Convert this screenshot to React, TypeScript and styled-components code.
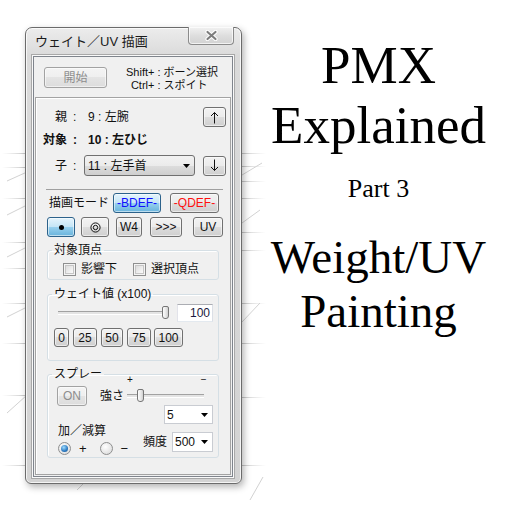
import React from 'react';
import styled, { createGlobalStyle } from 'styled-components';

const UI_FONT = `"Liberation Sans", "Noto Sans CJK JP", sans-serif`;
const SERIF = `"Liberation Serif", "Times New Roman", serif`;

const GlobalStyle = createGlobalStyle`
  * { box-sizing: border-box; }
  html, body { margin: 0; padding: 0; background: #fff; }
  body { width: 512px; height: 512px; overflow: hidden; font-family: ${UI_FONT}; }
`;

const Page = styled.div`
  position: relative;
  display: flex;
  width: 512px;
  height: 512px;
  background: #fff;
  overflow: hidden;
`;

// faint guide strokes behind the dialog
const Backdrop = styled.svg`
  position: absolute;
  left: 0;
  top: 0;
  width: 512px;
  height: 512px;
  pointer-events: none;
`;

const WindowSlot = styled.div`
  position: relative;
  z-index: 1;
  flex: none;
  padding: 27px 0 0 25px;
`;

const Window = styled.div`
  display: flex;
  flex-direction: column;
  width: 217px;
  height: 457px;
  border: 1px solid #6b6b6b;
  border-radius: 7px 7px 6px 6px;
  background: linear-gradient(#ececec, #dadada 28px, #d3d3d3);
  box-shadow: inset 0 0 0 1px rgba(255, 255, 255, 0.75), 2px 3px 7px rgba(0, 0, 0, 0.3);
`;

const TitleBar = styled.div`
  display: flex;
  align-items: flex-start;
  height: 28px;
  padding: 0 7px 0 9px;
`;

const TitleText = styled.span`
  font-size: 13px;
  line-height: 28px;
  color: #1b1b1b;
  white-space: nowrap;
`;

const CloseButton = styled.div`
  display: flex;
  align-items: center;
  justify-content: center;
  width: 46px;
  height: 18px;
  margin: -1px 0 0 auto;
  border: 1px solid #8b8b8b;
  border-top: none;
  border-radius: 0 0 4px 4px;
  background: linear-gradient(#f2f2f2, #dedede 50%, #d2d2d2);
  box-shadow: inset 0 0 0 1px rgba(255, 255, 255, 0.7);
`;

const Client = styled.div`
  display: flex;
  flex-direction: column;
  flex: 1;
  margin: 0 8px 6px 7px;
  border: 1px solid #7f848c;
  background: #f0f0f0;
  box-shadow: 0 0 0 1px #f9f9f9, 0 0 0 2px #a8a8a8;
`;

const TopRow = styled.div`
  display: flex;
  align-items: flex-start;
  height: 40px;
  padding: 10px 0 0 10px;
`;

const Hints = styled.div`
  display: grid;
  grid-template-columns: auto auto;
  column-gap: 3px;
  margin: -1px 0 0 19px;
  font-size: 11px;
  line-height: 13px;
  color: #111;
  white-space: nowrap;
`;

const HintKey = styled.span`
  text-align: right;
`;

const Panel = styled.div`
  display: flex;
  flex-direction: column;
  flex: 1;
  margin: 0 1px 1px 1px;
  border: 1px solid #a3a3a3;
  box-shadow: inset 1px 1px 0 #fff;
`;

const BoneRow = styled.div<{ $h: number; $mt: number }>`
  display: flex;
  align-items: center;
  height: ${p => p.$h}px;
  margin-top: ${p => p.$mt}px;
  font-size: 12px;
  line-height: 14px;
  color: #111;
`;

const BoneLabel = styled.span<{ $bold?: boolean }>`
  flex: none;
  width: 31px;
  text-align: right;
  font-weight: ${p => (p.$bold ? 700 : 400)};
`;

const BoneSep = styled.span<{ $bold?: boolean }>`
  flex: none;
  width: 17px;
  padding-left: 6px;
  font-weight: ${p => (p.$bold ? 700 : 400)};
`;

const BoneValue = styled.div<{ $bold?: boolean }>`
  display: flex;
  align-items: center;
  flex: none;
  width: 119px;
  padding-left: 4px;
  font-weight: ${p => (p.$bold ? 700 : 400)};
  white-space: nowrap;
`;

const Divider = styled.div`
  height: 0;
  margin: 13px 7px 0 10px;
  border-top: 1px solid #a0a0a0;
`;

const ModeRow = styled.div`
  display: flex;
  align-items: center;
  height: 20px;
  margin-top: 3px;
  padding-left: 13px;
`;

const ModeLabel = styled.span`
  flex: none;
  width: 64px;
  font-size: 12px;
  line-height: 14px;
  color: #111;
`;

const ToolRow = styled.div`
  display: flex;
  align-items: center;
  height: 20px;
  margin-top: 4px;
  padding-left: 11px;
`;

const Btn = styled.button<{ $w: number; $h?: number; $on?: boolean; $ink?: string; $dim?: boolean; $ml?: number }>`
  flex: none;
  display: inline-flex;
  align-items: center;
  justify-content: center;
  width: ${p => p.$w}px;
  height: ${p => p.$h ?? 20}px;
  margin: 0 0 0 ${p => p.$ml ?? 0}px;
  padding: 0;
  border: 1px solid ${p => (p.$on ? '#2c628b' : p.$dim ? '#a2a2a2' : '#707070')};
  border-radius: 3px;
  background: ${p =>
    p.$on
      ? 'linear-gradient(#e5f4fc, #c4e5f6 50%, #98d1ef 50%, #68b3db)'
      : p.$dim
      ? 'linear-gradient(#f4f4f4, #efefef 50%, #e4e4e4 50%, #dcdcdc)'
      : 'linear-gradient(#f2f2f2, #ebebeb 50%, #dddddd 50%, #cfcfcf)'};
  box-shadow: inset 0 0 0 1px rgba(255, 255, 255, 0.55);
  font-family: ${UI_FONT};
  font-size: 12px;
  line-height: 1;
  color: ${p => (p.$dim ? '#8d8d8d' : p.$ink ?? '#111')};
  white-space: nowrap;
`;

const Dot = styled.span`
  width: 5px;
  height: 5px;
  border-radius: 50%;
  background: #000;
`;

const Group = styled.fieldset<{ $mt: number; $pb: number }>`
  margin: ${p => p.$mt}px 11px 0 11px;
  padding: 0 0 ${p => p.$pb}px 0;
  min-width: 0;
  border: 1px solid #d5dfe5;
  border-radius: 3px;
  box-shadow: inset 1px 1px 0 #fff;
`;

const Legend = styled.legend`
  margin-left: 4px;
  padding: 0 2px;
  font-size: 12px;
  line-height: 14px;
  color: #111;
`;

const CheckRow = styled.div`
  display: flex;
  align-items: center;
  height: 18px;
  margin-top: 3px;
  padding-left: 15px;
  font-size: 12px;
  line-height: 14px;
  color: #111;
`;

const CheckBox = styled.span<{ $ml?: number }>`
  position: relative;
  flex: none;
  width: 13px;
  height: 13px;
  margin-left: ${p => p.$ml ?? 0}px;
  margin-right: 5px;
  border: 1px solid #8e8f8f;
  background: #f4f4f4;
  &::after {
    content: '';
    position: absolute;
    inset: 1px;
    border: 1px solid #c6c6c6;
    background: linear-gradient(135deg, #dcdcdc, #fbfbfb);
  }
`;

const SliderRow = styled.div`
  display: flex;
  align-items: center;
  height: 18px;
  margin-top: 3px;
  padding-left: 10px;
`;

const SliderBox = styled.div<{ $w: number; $ml?: number }>`
  position: relative;
  flex: none;
  width: ${p => p.$w}px;
  height: 14px;
  margin-left: ${p => p.$ml ?? 0}px;
`;

const Groove = styled.div`
  position: absolute;
  left: 0;
  right: 2px;
  top: 5px;
  height: 4px;
  border-top: 1px solid #a2a2a2;
  border-bottom: 1px solid #fff;
  background: #e4e4e4;
`;

const Thumb = styled.div`
  position: absolute;
  top: 0;
  width: 7px;
  height: 13px;
  border: 1px solid #767676;
  border-radius: 2px 2px 3px 3px;
  background: linear-gradient(90deg, #fdfdfd, #e6e6e6 60%, #cfcfcf);
`;

const TextBox = styled.div`
  display: flex;
  align-items: center;
  justify-content: flex-end;
  flex: none;
  width: 36px;
  height: 18px;
  margin-left: 8px;
  padding-right: 2px;
  border: 1px solid;
  border-color: #abadb3 #dbdfe6 #e3e9ef #e2e3ea;
  background: #fff;
  font-size: 12px;
  color: #1a1a40;
`;

const PresetRow = styled.div`
  display: flex;
  align-items: center;
  height: 19px;
  margin-top: 6px;
  padding-left: 6px;
`;

const Combo = styled.div<{ $w: number; $h: number; $flat?: boolean; $ml?: number }>`
  display: flex;
  align-items: center;
  flex: none;
  width: ${p => p.$w}px;
  height: ${p => p.$h}px;
  margin-left: ${p => p.$ml ?? 0}px;
  padding: 0 4px 0 ${p => (p.$flat ? 2 : 3)}px;
  border: 1px solid ${p => (p.$flat ? '#c9ccd2' : '#707070')};
  border-radius: ${p => (p.$flat ? 0 : 3)}px;
  background: ${p => (p.$flat ? '#fff' : 'linear-gradient(#f2f2f2, #ebebeb 50%, #dddddd 50%, #cfcfcf)')};
  font-size: 12px;
  line-height: 14px;
  color: #111;
  white-space: nowrap;
`;

const ComboText = styled.span`
  flex: 1;
`;

const TickRow = styled.div`
  display: flex;
  align-items: center;
  height: 10px;
  margin-top: -6px;
  padding-left: 79px;
  font-size: 10px;
  line-height: 10px;
  color: #111;
`;

const Tick = styled.span<{ $ml?: number }>`
  margin-left: ${p => p.$ml ?? 0}px;
`;

const StrengthRow = styled.div`
  display: flex;
  align-items: center;
  height: 20px;
  margin-top: 1px;
  padding-left: 9px;
`;

const Caption = styled.span<{ $w?: number; $ml?: number }>`
  flex: none;
  width: ${p => (p.$w ? `${p.$w}px` : 'auto')};
  margin-left: ${p => p.$ml ?? 0}px;
  font-size: 12px;
  line-height: 14px;
  color: #111;
  white-space: nowrap;
`;

const LevelRow = styled.div`
  display: flex;
  height: 19px;
  margin-top: -1px;
  padding-left: 116px;
`;

const BottomRow = styled.div`
  display: flex;
  height: 30px;
  padding-left: 10px;
`;

const BlendColumn = styled.div`
  display: flex;
  flex-direction: column;
  flex: none;
  width: 75px;
`;

const RadioRow = styled.div`
  display: flex;
  align-items: center;
  height: 13px;
  margin-top: 4px;
  font-size: 13px;
  line-height: 13px;
  color: #111;
`;

const Radio = styled.span<{ $on?: boolean; $ml?: number }>`
  display: inline-flex;
  align-items: center;
  justify-content: center;
  flex: none;
  width: 13px;
  height: 13px;
  margin-left: ${p => p.$ml ?? 0}px;
  border: 1px solid #8e8f8f;
  border-radius: 50%;
  background: radial-gradient(circle at 40% 35%, #ffffff, #d6d6d6);
  &::after {
    content: '';
    width: 7px;
    height: 7px;
    border-radius: 50%;
    background: ${p => (p.$on ? 'radial-gradient(circle at 40% 35%, #9fdcff, #2a78c0 60%, #154e86)' : 'transparent')};
  }
`;

const Sign = styled.span<{ $ml: number }>`
  margin-left: ${p => p.$ml}px;
`;

const RateGroup = styled.div`
  display: flex;
  align-items: center;
  align-self: flex-end;
  height: 20px;
  margin: 0 0 2px 10px;
`;

const TitleColumn = styled.div`
  position: relative;
  z-index: 1;
  display: flex;
  flex-direction: column;
  align-items: center;
  flex: 1;
  padding: 35px 0 0 3px;
  font-family: ${SERIF};
  color: #000;
`;

const Headline = styled.div<{ $size: number; $lh: number; $mt?: number }>`
  font-size: ${p => p.$size}px;
  line-height: ${p => p.$lh}px;
  margin-top: ${p => p.$mt ?? 0}px;
  white-space: nowrap;
`;

const CloseGlyph = () => (
  <svg width="13" height="11" viewBox="0 0 13 11">
    <path d="M2.5 2 L10.5 9 M10.5 2 L2.5 9" stroke="#fff" strokeWidth="4.2" strokeLinecap="round" />
    <path d="M2.5 2 L10.5 9 M10.5 2 L2.5 9" stroke="#7d7d7d" strokeWidth="2.2" strokeLinecap="round" />
  </svg>
);

const Arrow = ({ down }: { down?: boolean }) => (
  <svg width="9" height="13" viewBox="0 0 9 13" style={{ transform: down ? 'scaleY(-1)' : undefined }}>
    <path d="M4.5 1.5 V12.5 M1 5 L4.5 1.5 L8 5" stroke="#111" strokeWidth="1" fill="none" />
  </svg>
);

const Caret = () => (
  <svg width="7" height="4" viewBox="0 0 7 4">
    <path d="M0 0 H7 L3.5 4 Z" fill="#000" />
  </svg>
);

const Rings = () => (
  <svg width="11" height="11" viewBox="0 0 11 11">
    <circle cx="5.5" cy="5.5" r="4.6" stroke="#111" strokeWidth="1" fill="none" />
    <circle cx="5.5" cy="5.5" r="2.2" stroke="#111" strokeWidth="1" fill="none" />
  </svg>
);

const Slider = ({ width, value, ml }: { width: number; value: number; ml?: number }) => (
  <SliderBox $w={width} $ml={ml}>
    <Groove />
    <Thumb style={{ left: Math.round(value * (width - 7)) }} />
  </SliderBox>
);

const leftRules = [153, 167, 198, 242, 268, 303, 343, 395, 465];
const rightRules = [153, 166, 181, 198, 232, 250, 303, 343, 397, 465];
const slants: [number, number, number, number][] = [
  [7, 181, 27, 172],
  [7, 215, 27, 205],
  [7, 257, 27, 247],
  [7, 317, 27, 307],
  [7, 413, 27, 395],
  [242, 175, 262, 163],
  [242, 223, 260, 210],
  [242, 322, 260, 303],
  [250, 500, 263, 477],
  [77, 490, 84, 483],
];

export default function App() {
  return (
    <>
      <GlobalStyle />
      <Page>
        <Backdrop viewBox="0 0 512 512">
          <defs>
            <linearGradient id="fadeLeft" x1="0" x2="1" y1="0" y2="0">
              <stop offset="0" stopColor="#d4d4d4" stopOpacity="0" />
              <stop offset="1" stopColor="#c4c4c4" />
            </linearGradient>
            <linearGradient id="fadeRight" x1="0" x2="1" y1="0" y2="0">
              <stop offset="0" stopColor="#c4c4c4" />
              <stop offset="1" stopColor="#d4d4d4" stopOpacity="0" />
            </linearGradient>
          </defs>
          {leftRules.map(y => (
            <rect key={`l${y}`} x="2" y={y} width="24" height="1" fill="url(#fadeLeft)" />
          ))}
          {rightRules.map(y => (
            <rect key={`r${y}`} x="242" y={y} width="24" height="1" fill="url(#fadeRight)" />
          ))}
          {slants.map(([x1, y1, x2, y2], i) => (
            <line key={i} x1={x1} y1={y1} x2={x2} y2={y2} stroke="#d2d2d2" strokeWidth="1" />
          ))}
        </Backdrop>

        <WindowSlot>
          <Window>
            <TitleBar>
              <TitleText>ウェイト／UV 描画</TitleText>
              <CloseButton>
                <CloseGlyph />
              </CloseButton>
            </TitleBar>

            <Client>
              <TopRow>
                <Btn $w={63} $h={21} $dim>
                  開始
                </Btn>
                <Hints>
                  <HintKey>Shift+ :</HintKey>
                  <span>ボーン選択</span>
                  <HintKey>Ctrl+ :</HintKey>
                  <span>スポイト</span>
                </Hints>
              </TopRow>

              <Panel>
                <BoneRow $h={20} $mt={9}>
                  <BoneLabel>親</BoneLabel>
                  <BoneSep>:</BoneSep>
                  <BoneValue>9 : 左腕</BoneValue>
                  <Btn $w={23} $h={20}>
                    <Arrow />
                  </Btn>
                </BoneRow>
                <BoneRow $h={20} $mt={3}>
                  <BoneLabel $bold>対象</BoneLabel>
                  <BoneSep $bold>:</BoneSep>
                  <BoneValue $bold>10 : 左ひじ</BoneValue>
                </BoneRow>
                <BoneRow $h={21} $mt={5}>
                  <BoneLabel>子</BoneLabel>
                  <BoneSep>:</BoneSep>
                  <Combo $w={111} $h={21}>
                    <ComboText>11 : 左手首</ComboText>
                    <Caret />
                  </Combo>
                  <Btn $w={23} $h={20} $ml={8}>
                    <Arrow down />
                  </Btn>
                </BoneRow>

                <Divider />

                <ModeRow>
                  <ModeLabel>描画モード</ModeLabel>
                  <Btn $w={48} $on $ink="#1010ff">
                    -BDEF-
                  </Btn>
                  <Btn $w={49} $ml={9} $ink="#ff1010">
                    -QDEF-
                  </Btn>
                </ModeRow>

                <ToolRow>
                  <Btn $w={28} $on>
                    <Dot />
                  </Btn>
                  <Btn $w={28} $ml={6}>
                    <Rings />
                  </Btn>
                  <Btn $w={26} $ml={7}>
                    W4
                  </Btn>
                  <Btn $w={32} $ml={8}>
                    &gt;&gt;&gt;
                  </Btn>
                  <Btn $w={30} $ml={11}>
                    UV
                  </Btn>
                </ToolRow>

                <Group $mt={6} $pb={1}>
                  <Legend>対象頂点</Legend>
                  <CheckRow>
                    <CheckBox />
                    影響下
                    <CheckBox $ml={16} />
                    選択頂点
                  </CheckRow>
                </Group>

                <Group $mt={7} $pb={13}>
                  <Legend>ウェイト値 (x100)</Legend>
                  <SliderRow>
                    <Slider width={111} value={1} />
                    <TextBox>100</TextBox>
                  </SliderRow>
                  <PresetRow>
                    <Btn $w={15} $h={19}>0</Btn>
                    <Btn $w={24} $h={19} $ml={4}>25</Btn>
                    <Btn $w={22} $h={19} $ml={4}>50</Btn>
                    <Btn $w={24} $h={19} $ml={4}>75</Btn>
                    <Btn $w={29} $h={19} $ml={3}>100</Btn>
                  </PresetRow>
                </Group>

                <Group $mt={6} $pb={3}>
                  <Legend>スプレー</Legend>
                  <TickRow>
                    <Tick>+</Tick>
                    <Tick $ml={68}>−</Tick>
                  </TickRow>
                  <StrengthRow>
                    <Btn $w={30} $h={20} $dim>
                      ON
                    </Btn>
                    <Caption $w={27} $ml={13}>
                      強さ
                    </Caption>
                    <Slider width={79} value={0.14} />
                  </StrengthRow>
                  <LevelRow>
                    <Combo $w={49} $h={19} $flat>
                      <ComboText>5</ComboText>
                      <Caret />
                    </Combo>
                  </LevelRow>
                  <BottomRow>
                    <BlendColumn>
                      <Caption>加／減算</Caption>
                      <RadioRow>
                        <Radio $on />
                        <Sign $ml={8}>+</Sign>
                        <Radio $ml={13} />
                        <Sign $ml={8}>−</Sign>
                      </RadioRow>
                    </BlendColumn>
                    <RateGroup>
                      <Caption $w={29}>頻度</Caption>
                      <Combo $w={41} $h={20} $flat>
                        <ComboText>500</ComboText>
                        <Caret />
                      </Combo>
                    </RateGroup>
                  </BottomRow>
                </Group>
              </Panel>
            </Client>
          </Window>
        </WindowSlot>

        <TitleColumn>
          <Headline $size={53} $lh={60}>PMX</Headline>
          <Headline $size={53} $lh={60}>Explained</Headline>
          <Headline $size={26} $lh={30} $mt={19}>Part 3</Headline>
          <Headline $size={47} $lh={54} $mt={26}>Weight/UV</Headline>
          <Headline $size={47} $lh={54}>Painting</Headline>
        </TitleColumn>
      </Page>
    </>
  );
}
